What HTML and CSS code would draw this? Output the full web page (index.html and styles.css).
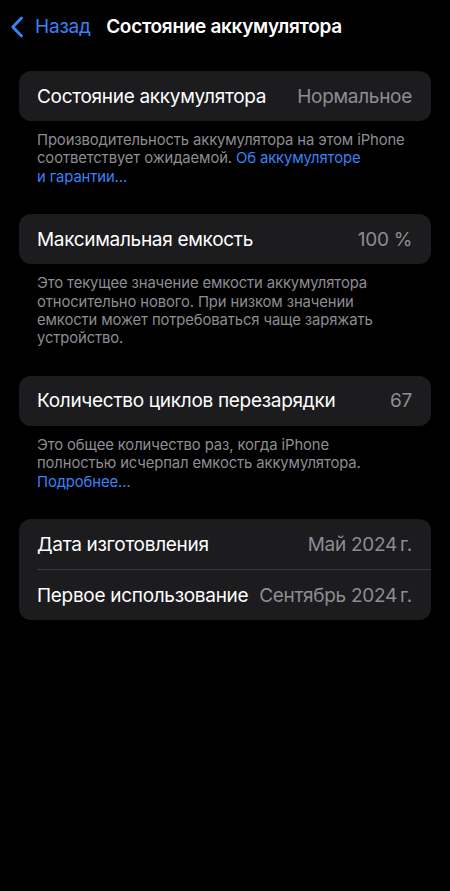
FILE: index.html
```html
<!doctype html>
<html lang="ru">
  <head>
    <meta charset="utf-8" />
    <title>Состояние аккумулятора</title>
    <link rel="stylesheet" href="styles.css">
  </head>
  <body>
    <div class="nav">
      <a class="back" href="#">
        <svg class="chevron" width="14" height="22" viewBox="0 0 14 22">
          <path d="M11.5 2 L2.8 11 L11.5 20" fill="none" stroke="#3b82f7" stroke-width="2.9" stroke-linecap="round" stroke-linejoin="round"/>
        </svg>
        <span>Назад</span>
      </a>
      <div class="title">Состояние аккумулятора</div>
      <div></div>
    </div>

    <div class="content">
      <div class="card first">
        <div class="row"><span class="label">Состояние аккумулятора</span><span class="value">Нормальное</span></div>
      </div>
      <p class="note">Производительность аккумулятора на этом iPhone соответствует ожидаемой. <a href="#">Об аккумуляторе и&nbsp;гарантии…</a></p>

      <div class="card">
        <div class="row"><span class="label">Максимальная емкость</span><span class="value">100 %</span></div>
      </div>
      <p class="note">Это текущее значение емкости аккумулятора относительно нового. При низком значении емкости может потребоваться чаще заряжать устройство.</p>

      <div class="card">
        <div class="row"><span class="label">Количество циклов перезарядки</span><span class="value">67</span></div>
      </div>
      <p class="note">Это общее количество раз, когда iPhone полностью исчерпал емкость аккумулятора. <a href="#">Подробнее…</a></p>

      <div class="card">
        <div class="row"><span class="label">Дата изготовления</span><span class="value">Май 2024&#8201;г.</span></div>
        <div class="row"><span class="label">Первое использование</span><span class="value">Сентябрь 2024&#8201;г.</span></div>
      </div>
    </div>
  </body>
</html>
```

FILE: styles.css
```css
body {
  margin: 0;
  background-color: #000;
  color: #fff;
  font-family: Inter, "Noto Sans", sans-serif;
  -webkit-font-smoothing: antialiased;
}
a { color: #3b82f7; text-decoration: none; }

.nav {
  display: grid;
  grid-template-columns: 1fr auto 1fr;
  align-items: center;
  height: 53px;
}
.back {
  display: flex;
  align-items: center;
  gap: 11px;
  padding-left: 10px;
  font-size: 19px;
  letter-spacing: -0.2px;
}
.title {
  font-size: 19px;
  font-weight: 600;
  letter-spacing: -0.3px;
  padding-right: 2px;
}

.content {
  padding: 0 19px;
}
.card {
  background-color: #1c1c1e;
  border-radius: 12px;
  margin-top: 28px;
}
.card.first { margin-top: 18px; }
.row {
  display: flex;
  justify-content: space-between;
  align-items: center;
  height: 50px;
  margin-left: 18px;
  padding-right: 19px;
  font-size: 19px;
  letter-spacing: -0.3px;
}
.row + .row {
  border-top: 0.5px solid #3a3a3c;
}
.label { color: #fff; }
.value { color: #8d8d93; }

.note {
  margin: 10px 0 0;
  padding: 0 24px 0 18px;
  font-size: 14.8px;
  line-height: 18.4px;
  color: #8d8d93;
  letter-spacing: -0.1px;
}
```
